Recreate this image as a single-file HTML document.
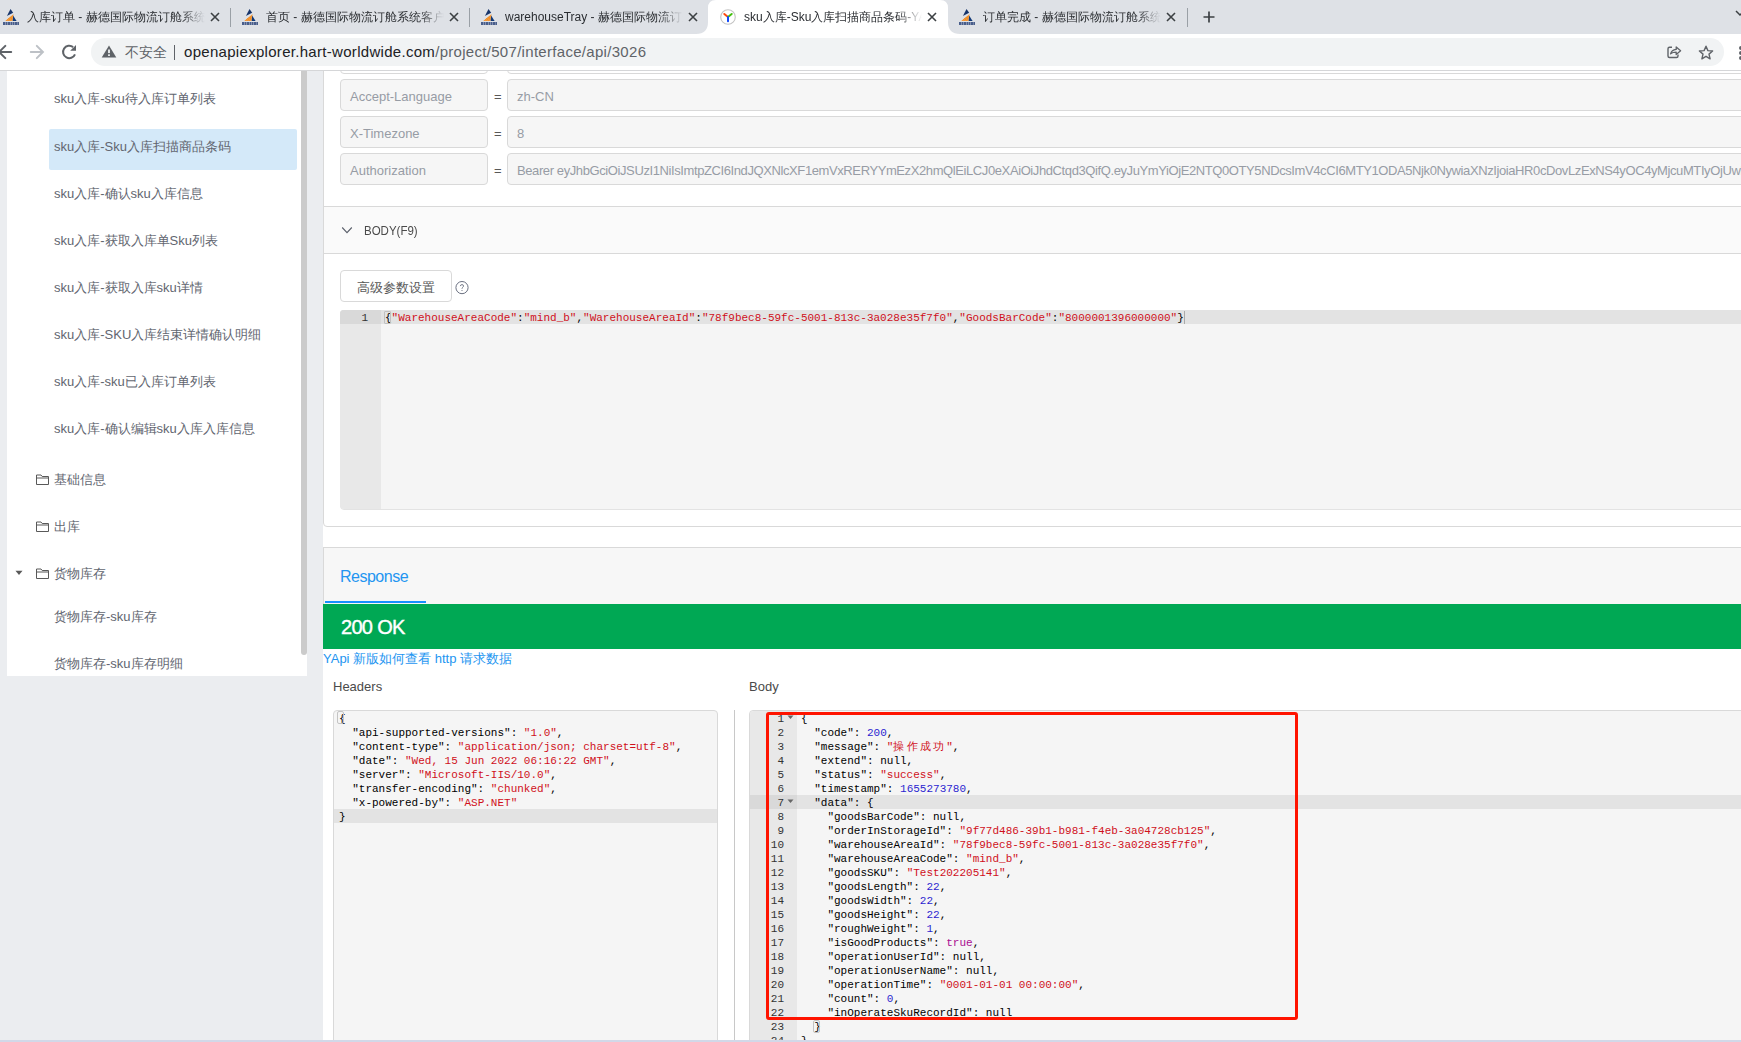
<!DOCTYPE html>
<html><head><meta charset="utf-8">
<style>
*{box-sizing:border-box;margin:0;padding:0}
html,body{width:1741px;height:1042px;overflow:hidden;background:#ebedf0;font-family:"Liberation Sans",sans-serif;}
.a{position:absolute}
.mono{font-family:"Liberation Mono",monospace;font-size:11px;line-height:14px;white-space:pre}
/* tabs */
#tabs{left:0;top:0;width:1741px;height:34px;background:#dee1e6}
.tt{position:absolute;top:10px;font-size:12px;line-height:14px;color:#2a2d31;white-space:nowrap;overflow:hidden}
.tx{position:absolute;top:11px;width:12px;height:12px}
.sep{position:absolute;top:8px;width:1px;height:19px;background:#9aa0a6}
#toolbar{left:0;top:34px;width:1741px;height:36px;background:#fff}
#tbb{left:0;top:70px;width:1741px;height:1px;background:#d5d6d8}
#omni{left:91px;top:38px;width:1633px;height:28px;border-radius:14px;background:#f1f3f4}
/* sidebar */
#side{left:7px;top:71px;width:300px;height:605px;background:#fff}
.si{position:absolute;left:54px;font-size:13px;line-height:16px;color:#626670;white-space:nowrap}
#thumb{left:301px;top:71px;width:6px;height:584px;background:#cbcbcb;border-radius:0 0 3px 3px}
/* main */
#main{left:323px;top:71px;width:1418px;height:969px;background:#fff}
.inp{position:absolute;height:32px;border:1px solid #d9d9d9;border-radius:4px;background:#f6f6f6;font-size:13px;line-height:30px;color:#979ca5;padding-left:9px;padding-top:2px;white-space:nowrap;overflow:hidden}
.eq{position:absolute;left:494px;font-size:13px;color:#595959;line-height:16px}
.str{color:#d0101b}
.num{color:#2b1fd0}
.kw{color:#aa0d91}
</style></head><body>

<!-- TAB STRIP -->
<div id="tabs" class="a">
  <!-- active tab -->
  <svg class="a" style="left:696px;top:0" width="264" height="34" viewBox="0 0 264 34">
    <path d="M0 34 Q12 34 12 22 L12 8 Q12 0 20 0 L244 0 Q252 0 252 8 L252 22 Q252 34 264 34 Z" fill="#fff"/>
  </svg>
<svg class="a" style="left:0px;top:6px" width="24" height="22" viewBox="0 0 24 22"><path d="M10.5 3 L13.2 6.8 L6.9 9.9 Z" fill="#16346b"/><path d="M5.2 14.9 L13.6 7.9 L12.6 14.9 Z" fill="#f5a24a"/><path d="M6.5 14.9 L9.5 11.6 M8.6 14.9 L11.4 10.3 M10.6 14.9 L12.5 9.6" stroke="#f08a1e" stroke-width="0.9"/><path d="M13.1 9.4 L16.6 14.9 L12.7 14.9 Z" fill="#123a78"/><path d="M3 16 H5.2 V19 H3 Z M5.6 16 H7.6 V19 H5.6 Z M8 16 H10 V19 H8 Z M10.4 16 H12.2 V19 H10.4 Z M12.6 16 H14.6 V19 H12.6 Z M15 16 H17 V19 H15 Z M17.3 16 H19 V19 H17.3 Z" fill="#2f467a" opacity="0.85"/></svg><div class="tt" style="left:27px;width:178px;-webkit-mask-image:linear-gradient(to right,#000 154px,transparent 178px)">入库订单 - 赫德国际物流订舱系统客户端</div><svg class="a" style="left:209px;top:11px" width="12" height="12" viewBox="0 0 12 12"><path d="M2 2 L10 10 M10 2 L2 10" stroke="#3c4043" stroke-width="1.6"/></svg><div class="sep" style="left:230px"></div><svg class="a" style="left:239px;top:6px" width="24" height="22" viewBox="0 0 24 22"><path d="M10.5 3 L13.2 6.8 L6.9 9.9 Z" fill="#16346b"/><path d="M5.2 14.9 L13.6 7.9 L12.6 14.9 Z" fill="#f5a24a"/><path d="M6.5 14.9 L9.5 11.6 M8.6 14.9 L11.4 10.3 M10.6 14.9 L12.5 9.6" stroke="#f08a1e" stroke-width="0.9"/><path d="M13.1 9.4 L16.6 14.9 L12.7 14.9 Z" fill="#123a78"/><path d="M3 16 H5.2 V19 H3 Z M5.6 16 H7.6 V19 H5.6 Z M8 16 H10 V19 H8 Z M10.4 16 H12.2 V19 H10.4 Z M12.6 16 H14.6 V19 H12.6 Z M15 16 H17 V19 H15 Z M17.3 16 H19 V19 H17.3 Z" fill="#2f467a" opacity="0.85"/></svg><div class="tt" style="left:266px;width:178px;-webkit-mask-image:linear-gradient(to right,#000 154px,transparent 178px)">首页 - 赫德国际物流订舱系统客户端</div><svg class="a" style="left:448px;top:11px" width="12" height="12" viewBox="0 0 12 12"><path d="M2 2 L10 10 M10 2 L2 10" stroke="#3c4043" stroke-width="1.6"/></svg><div class="sep" style="left:469px"></div><svg class="a" style="left:478px;top:6px" width="24" height="22" viewBox="0 0 24 22"><path d="M10.5 3 L13.2 6.8 L6.9 9.9 Z" fill="#16346b"/><path d="M5.2 14.9 L13.6 7.9 L12.6 14.9 Z" fill="#f5a24a"/><path d="M6.5 14.9 L9.5 11.6 M8.6 14.9 L11.4 10.3 M10.6 14.9 L12.5 9.6" stroke="#f08a1e" stroke-width="0.9"/><path d="M13.1 9.4 L16.6 14.9 L12.7 14.9 Z" fill="#123a78"/><path d="M3 16 H5.2 V19 H3 Z M5.6 16 H7.6 V19 H5.6 Z M8 16 H10 V19 H8 Z M10.4 16 H12.2 V19 H10.4 Z M12.6 16 H14.6 V19 H12.6 Z M15 16 H17 V19 H15 Z M17.3 16 H19 V19 H17.3 Z" fill="#2f467a" opacity="0.85"/></svg><div class="tt" style="left:505px;width:178px;-webkit-mask-image:linear-gradient(to right,#000 154px,transparent 178px)">warehouseTray - 赫德国际物流订舱系统</div><svg class="a" style="left:687px;top:11px" width="12" height="12" viewBox="0 0 12 12"><path d="M2 2 L10 10 M10 2 L2 10" stroke="#3c4043" stroke-width="1.6"/></svg><svg class="a" style="left:720px;top:9px" width="16" height="16" viewBox="0 0 16 16"><circle cx="8" cy="8" r="7.3" fill="#fff" stroke="#c4c4c4" stroke-width="1.1"/><path d="M8 8 L4.3 5" stroke="#ff4a10" stroke-width="2" stroke-linecap="round"/><path d="M8 8 L11.7 5" stroke="#44c010" stroke-width="2" stroke-linecap="round"/><path d="M8 8 L8 12.3" stroke="#1048f8" stroke-width="2" stroke-linecap="round"/></svg><div class="tt" style="left:744px;width:178px;-webkit-mask-image:linear-gradient(to right,#000 154px,transparent 178px)">sku入库-Sku入库扫描商品条码-YApi</div><svg class="a" style="left:926px;top:11px" width="12" height="12" viewBox="0 0 12 12"><path d="M2 2 L10 10 M10 2 L2 10" stroke="#3c4043" stroke-width="1.6"/></svg><svg class="a" style="left:956px;top:6px" width="24" height="22" viewBox="0 0 24 22"><path d="M10.5 3 L13.2 6.8 L6.9 9.9 Z" fill="#16346b"/><path d="M5.2 14.9 L13.6 7.9 L12.6 14.9 Z" fill="#f5a24a"/><path d="M6.5 14.9 L9.5 11.6 M8.6 14.9 L11.4 10.3 M10.6 14.9 L12.5 9.6" stroke="#f08a1e" stroke-width="0.9"/><path d="M13.1 9.4 L16.6 14.9 L12.7 14.9 Z" fill="#123a78"/><path d="M3 16 H5.2 V19 H3 Z M5.6 16 H7.6 V19 H5.6 Z M8 16 H10 V19 H8 Z M10.4 16 H12.2 V19 H10.4 Z M12.6 16 H14.6 V19 H12.6 Z M15 16 H17 V19 H15 Z M17.3 16 H19 V19 H17.3 Z" fill="#2f467a" opacity="0.85"/></svg><div class="tt" style="left:983px;width:178px;-webkit-mask-image:linear-gradient(to right,#000 154px,transparent 178px)">订单完成 - 赫德国际物流订舱系统客户端</div><svg class="a" style="left:1165px;top:11px" width="12" height="12" viewBox="0 0 12 12"><path d="M2 2 L10 10 M10 2 L2 10" stroke="#3c4043" stroke-width="1.6"/></svg><div class="sep" style="left:1187px"></div><svg class="a" style="left:1203px;top:11px" width="12" height="12" viewBox="0 0 12 12"><path d="M6 0.5 V11.5 M0.5 6 H11.5" stroke="#3c4043" stroke-width="1.7"/></svg><svg class="a" style="left:1733px;top:8px" width="10" height="10" viewBox="0 0 10 10"><path d="M3 3 L7 7 L11 3" stroke="#3c4043" stroke-width="1.5" fill="none"/></svg>
</div>

<!-- TOOLBAR -->
<div id="toolbar" class="a"></div>
<div id="tbb" class="a"></div>
<div id="omni" class="a"></div>
<svg class="a" style="left:0;top:38px" width="90" height="28" viewBox="0 0 90 28"><path d="M11.2 14 H0.5 M5.3 7.9 L-0.8 14 L5.3 20.1" stroke="#5f6368" stroke-width="2" fill="none" stroke-linecap="round"/><path d="M30.8 14 H43 M36.8 7.9 L42.9 14 L36.8 20.1" stroke="#bdc1c6" stroke-width="2" fill="none" stroke-linecap="round"/><path d="M73.1 9.1 A6.2 6.2 0 1 0 75 16.3" stroke="#5f6368" stroke-width="2" fill="none"/><path d="M76 7 L76 12.8 L70.2 12.8 Z" fill="#5f6368"/></svg>
<svg class="a" style="left:101px;top:45px" width="16" height="13" viewBox="0 0 16 13"><path d="M8 0.5 L15.3 12.6 L0.7 12.6 Z" fill="#5f6368"/><rect x="7.1" y="4.5" width="1.8" height="3.6" fill="#f1f3f4"/><rect x="7.1" y="9.3" width="1.8" height="1.7" fill="#f1f3f4"/></svg>
<div class="a" style="left:125px;top:43px;font-size:14px;line-height:18px;color:#5f6368;white-space:nowrap">不安全</div>
<div class="a" style="left:174px;top:45px;width:1px;height:15px;background:#5f6368"></div>
<div class="a" style="left:184px;top:43px;font-size:15px;line-height:18px;letter-spacing:0.3px;color:#5f6368;white-space:nowrap"><span style="color:#202124">openapiexplorer.hart-worldwide.com</span>/project/507/interface/api/3026</div>
<svg class="a" style="left:1666px;top:44px" width="16" height="15" viewBox="0 0 16 15"><path d="M6 3.2 H3.5 Q2 3.2 2 4.7 V12 Q2 13.5 3.5 13.5 H10.5 Q12 13.5 12 12 V10.5" stroke="#5f6368" stroke-width="1.4" fill="none"/><path d="M4.6 9.8 Q5.6 5.8 10.2 5.4 V3 L14.6 6.8 L10.2 10.6 V8.2 Q6.6 8.2 4.6 9.8 Z" stroke="#5f6368" stroke-width="1.3" fill="none" stroke-linejoin="round"/></svg>
<svg class="a" style="left:1698px;top:45px" width="16" height="15" viewBox="0 0 16 15"><path d="M8 1.2 L9.9 5.6 L14.6 6 L11 9.1 L12.1 13.8 L8 11.3 L3.9 13.8 L5 9.1 L1.4 6 L6.1 5.6 Z" stroke="#5f6368" stroke-width="1.4" fill="none" stroke-linejoin="round"/></svg>
<div class="a" style="left:1739px;top:46px;width:4px;height:3.5px;border-radius:2px;background:#5f6368"></div>
<div class="a" style="left:1739px;top:51px;width:4px;height:3.5px;border-radius:2px;background:#5f6368"></div>
<div class="a" style="left:1739px;top:56px;width:4px;height:3.5px;border-radius:2px;background:#5f6368"></div>


<!-- SIDEBAR -->
<div id="side" class="a"></div>
<div class="a" style="left:49px;top:129px;width:248px;height:41px;background:#d4e9f9;border-radius:2px"></div>
<div class="si" style="top:91px">sku入库-sku待入库订单列表</div>
<div class="si" style="top:139px">sku入库-Sku入库扫描商品条码</div>
<div class="si" style="top:186px">sku入库-确认sku入库信息</div>
<div class="si" style="top:233px">sku入库-获取入库单Sku列表</div>
<div class="si" style="top:280px">sku入库-获取入库sku详情</div>
<div class="si" style="top:327px">sku入库-SKU入库结束详情确认明细</div>
<div class="si" style="top:374px">sku入库-sku已入库订单列表</div>
<div class="si" style="top:421px">sku入库-确认编辑sku入库入库信息</div>
<svg class="a" style="left:36px;top:474px" width="13" height="11" viewBox="0 0 13 11"><path d="M0.5 1 H5 L6.2 2.5 H12.5 V10.5 H0.5 Z M0.5 4 H12.5" stroke="#595959" stroke-width="1" fill="none"/></svg><div class="si" style="top:472px">基础信息</div>
<svg class="a" style="left:36px;top:521px" width="13" height="11" viewBox="0 0 13 11"><path d="M0.5 1 H5 L6.2 2.5 H12.5 V10.5 H0.5 Z M0.5 4 H12.5" stroke="#595959" stroke-width="1" fill="none"/></svg><div class="si" style="top:519px">出库</div>
<svg class="a" style="left:36px;top:568px" width="13" height="11" viewBox="0 0 13 11"><path d="M0.5 1 H5 L6.2 2.5 H12.5 V10.5 H0.5 Z M0.5 4 H12.5" stroke="#595959" stroke-width="1" fill="none"/></svg><div class="si" style="top:566px">货物库存</div>
<svg class="a" style="left:15px;top:570px" width="8" height="6" viewBox="0 0 8 6"><path d="M0.5 0.8 H7.5 L4 5 Z" fill="#595959"/></svg>
<div class="si" style="top:609px">货物库存-sku库存</div>
<div class="si" style="top:656px">货物库存-sku库存明细</div>
<div id="thumb" class="a"></div>

<!-- MAIN -->
<div class="a" style="left:0;top:0;width:1741px;height:1042px;clip-path:inset(71px 0 0 0)">
<div class="a" style="left:323px;top:71px;width:1418px;height:969px;background:#fff"></div>
<div class="a" style="left:323px;top:40px;width:1440px;height:487px;border:1px solid #d9d9d9;border-radius:4px"></div>
<div class="inp" style="left:340px;top:42px;width:148px;background:#fff">Content-Type</div>
<div class="eq" style="top:52px">=</div>
<div class="inp" style="left:507px;top:42px;width:1260px;background:#fff">application/json</div>
<div class="inp" style="left:340px;top:79px;width:148px">Accept-Language</div>
<div class="eq" style="top:89px">=</div>
<div class="inp" style="left:507px;top:79px;width:1260px">zh-CN</div>
<div class="inp" style="left:340px;top:116px;width:148px">X-Timezone</div>
<div class="eq" style="top:126px">=</div>
<div class="inp" style="left:507px;top:116px;width:1260px">8</div>
<div class="inp" style="left:340px;top:153px;width:148px">Authorization</div>
<div class="eq" style="top:163px">=</div>
<div class="inp" style="left:507px;top:153px;width:1260px;letter-spacing:-0.4px">Bearer eyJhbGciOiJSUzI1NiIsImtpZCI6IndJQXNlcXF1emVxRERYYmEzX2hmQlEiLCJ0eXAiOiJhdCtqd3QifQ.eyJuYmYiOjE2NTQ0OTY5NDcsImV4cCI6MTY1ODA5Njk0NywiaXNzIjoiaHR0cDovLzExNS4yOC4yMjcuMTIyOjUwMDAiLCJjbGllbnRfaWQiOiJ</div>
<div class="a" style="left:324px;top:206px;width:1417px;height:48px;background:#fafafa;border-top:1px solid #d9d9d9;border-bottom:1px solid #d9d9d9"></div>
<svg class="a" style="left:341px;top:226px" width="12" height="9" viewBox="0 0 12 9"><path d="M1.2 1.5 L6 6.6 L10.8 1.5" stroke="#5a5f6a" stroke-width="1.1" fill="none"/></svg>
<div class="a" style="left:364px;top:224px;font-size:12.5px;line-height:15px;transform:scaleX(0.92);transform-origin:0 0;color:#4a4a4a;white-space:nowrap">BODY(F9)</div>
<div class="a" style="left:340px;top:270px;width:112px;height:32px;border:1px solid #d9d9d9;border-radius:4px;background:#fff;font-size:13px;line-height:30px;color:#595959;padding-left:16px;padding-top:2px;white-space:nowrap">高级参数设置</div>
<svg class="a" style="left:455px;top:281px" width="14" height="14" viewBox="0 0 14 14"><circle cx="7" cy="6.6" r="6.1" stroke="#6a7080" stroke-width="1" fill="none"/><path d="M5.4 5.1 Q5.4 3.6 7 3.6 Q8.5 3.6 8.5 5 Q8.5 5.9 7.5 6.5 Q7 6.9 7 7.8" stroke="#6a7080" stroke-width="0.9" fill="none"/><circle cx="7" cy="9.5" r="0.6" fill="#6a7080"/></svg>
<div class="a" style="left:340px;top:310px;width:1420px;height:200px;background:#f5f5f5;border:1px solid #e3e3e3;border-radius:4px;overflow:hidden"></div>
<div class="a" style="left:340px;top:310px;width:41px;height:199px;background:#e8e8e8;border-radius:4px 0 0 4px"></div>
<div class="a" style="left:340px;top:310px;width:1401px;height:14px;background:#e3e3e3;border-radius:4px 0 0 0"></div>
<div class="a" style="left:340px;top:310px;width:41px;height:14px;background:#d9d9d9;border-radius:4px 0 0 0"></div>
<div class="a mono" style="left:340px;top:311px;width:28px;text-align:right;color:#333">1</div>
<div class="a mono" style="left:385px;top:311px;color:#000">{<span class="str">"WarehouseAreaCode"</span>:<span class="str">"mind_b"</span>,<span class="str">"WarehouseAreaId"</span>:<span class="str">"78f9bec8-59fc-5001-813c-3a028e35f7f0"</span>,<span class="str">"GoodsBarCode"</span>:<span class="str">"8000001396000000"</span>}</div>
<div class="a" style="left:1184px;top:311px;width:1px;height:13px;background:#aaa"></div>
<div class="a" style="left:384px;top:311px;width:7px;height:13px;border:1px solid #c0c0c0;border-radius:1px"></div>
<div class="a" style="left:323px;top:547px;width:1430px;height:57px;background:#f7f7f7;border-top:1px solid #d9d9d9;border-left:1px solid #d9d9d9"></div>
<div class="a" style="left:340px;top:568px;font-size:16px;line-height:18px;letter-spacing:-0.5px;color:#2395f1;white-space:nowrap">Response</div>
<div class="a" style="left:325px;top:601px;width:101px;height:2px;background:#1890ff"></div>
<div class="a" style="left:323px;top:604px;width:1418px;height:45px;background:#00a854"></div>
<div class="a" style="left:341px;top:616px;font-size:20px;line-height:22px;letter-spacing:-0.7px;-webkit-text-stroke:0.4px #fff;color:#fff;white-space:nowrap">200 OK</div>
<div class="a" style="left:323px;top:651px;font-size:13px;line-height:16px;color:#2395f1;white-space:nowrap">YApi 新版如何查看 http 请求数据</div>
<div class="a" style="left:333px;top:679px;font-size:13px;line-height:16px;color:#4a4a4a;white-space:nowrap">Headers</div>
<div class="a" style="left:749px;top:679px;font-size:13px;line-height:16px;color:#4a4a4a;white-space:nowrap">Body</div>
<div class="a" style="left:333px;top:710px;width:385px;height:360px;background:#f5f5f5;border:1px solid #d9d9d9;border-radius:4px"></div>
<div class="a" style="left:334px;top:809px;width:383px;height:14px;background:#e3e3e3"></div>
<div class="a mono" style="left:339px;top:712px;color:#000">{
  "api-supported-versions": <span class="str">"1.0"</span>,
  "content-type": <span class="str">"application/json; charset=utf-8"</span>,
  "date": <span class="str">"Wed, 15 Jun 2022 06:16:22 GMT"</span>,
  "server": <span class="str">"Microsoft-IIS/10.0"</span>,
  "transfer-encoding": <span class="str">"chunked"</span>,
  "x-powered-by": <span class="str">"ASP.NET"</span>
}</div>
<div class="a" style="left:337px;top:711px;width:7px;height:13px;border:1px solid #c4c4c4;border-radius:2px"></div>
<div class="a" style="left:734px;top:710px;width:1px;height:340px;background:#c8c8c8"></div>
<div class="a" style="left:749px;top:710px;width:1010px;height:360px;background:#f5f5f5;border:1px solid #d9d9d9;border-radius:4px;overflow:hidden"></div>
<div class="a" style="left:750px;top:711px;width:47px;height:340px;background:#e8e8e8;border-radius:4px 0 0 0"></div>
<div class="a" style="left:750px;top:795px;width:1000px;height:14px;background:#e3e3e3"></div>
<div class="a" style="left:750px;top:795px;width:47px;height:14px;background:#d9d9d9"></div>
<div class="a mono" style="left:750px;top:712px;width:34px;text-align:right;color:#333">1
2
3
4
5
6
7
8
9
10
11
12
13
14
15
16
17
18
19
20
21
22
23
24</div>
<svg class="a" style="left:787px;top:715px" width="7" height="5" viewBox="0 0 7 5"><path d="M0.5 0.5 H6.5 L3.5 4 Z" fill="#666"/></svg>
<svg class="a" style="left:787px;top:799px" width="7" height="5" viewBox="0 0 7 5"><path d="M0.5 0.5 H6.5 L3.5 4 Z" fill="#666"/></svg>
<div class="a mono" style="left:801px;top:712px;color:#000">{
  "code": <span class="num">200</span>,
  "message": <span class="str">"<span style="letter-spacing:2.2px">操作成功</span>"</span>,
  "extend": null,
  "status": <span class="str">"success"</span>,
  "timestamp": <span class="num">1655273780</span>,
  "data": {
    "goodsBarCode": null,
    "orderInStorageId": <span class="str">"9f77d486-39b1-b981-f4eb-3a04728cb125"</span>,
    "warehouseAreaId": <span class="str">"78f9bec8-59fc-5001-813c-3a028e35f7f0"</span>,
    "warehouseAreaCode": <span class="str">"mind_b"</span>,
    "goodsSKU": <span class="str">"Test202205141"</span>,
    "goodsLength": <span class="num">22</span>,
    "goodsWidth": <span class="num">22</span>,
    "goodsHeight": <span class="num">22</span>,
    "roughWeight": <span class="num">1</span>,
    "isGoodProducts": <span class="kw">true</span>,
    "operationUserId": null,
    "operationUserName": null,
    "operationTime": <span class="str">"0001-01-01 00:00:00"</span>,
    "count": <span class="num">0</span>,
    "inOperateSkuRecordId": null
  }
}</div>
<div class="a" style="left:813px;top:1020px;width:7px;height:13px;border:1px solid #c4c4c4;border-radius:2px"></div>
<div class="a" style="left:766px;top:712px;width:532px;height:308px;border:3px solid #ff1400;border-radius:3px"></div>
<div class="a" style="left:0px;top:1040px;width:1741px;height:2px;background:#d2d8e8"></div>
</div>

</body></html>
